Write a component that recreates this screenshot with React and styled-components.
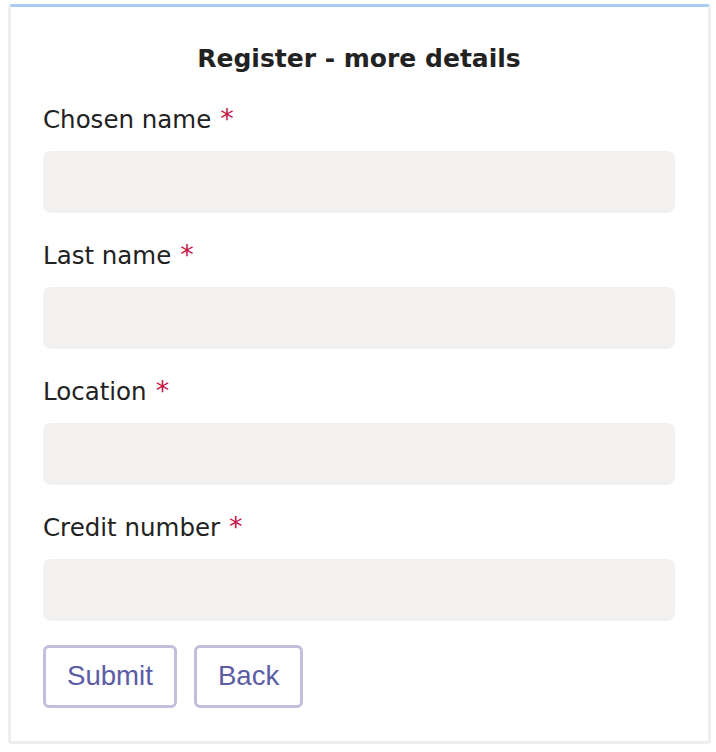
import React from "react";
import styled, { createGlobalStyle } from "styled-components";

const GlobalStyle = createGlobalStyle`
  html, body {
    margin: 0;
    padding: 0;
    background: #ffffff;
  }
  body {
    padding: 4px 5px 0 8px;
  }
`;

const Card = styled.form`
  box-sizing: border-box;
  width: 703px;
  height: 740px;
  border: 3px solid #efeeed;
  border-top: 3px solid #a9cdf0;
  border-radius: 4px;
  background: #fff;
  padding: 36px 33px 0 32px;
  display: flex;
  flex-direction: column;
  font-family: "DejaVu Sans", Verdana, sans-serif;
`;

const Title = styled.h2`
  margin: 0;
  text-align: center;
  font-size: 25px;
  font-weight: bold;
  color: #222;
  line-height: 32px;
`;

const Field = styled.div`
  display: flex;
  flex-direction: column;
  margin-top: ${(p) => (p.first ? "30px" : "28.5px")};
`;

const Label = styled.label`
  font-size: 24.5px;
  color: #222;
  line-height: 30px;
  margin-bottom: 15.5px;
`;

const Required = styled.span`
  color: #c6164a;
  margin-left: 9px;
  font-size: 27px;
  line-height: 20px;
`;

const Input = styled.input`
  box-sizing: border-box;
  width: 100%;
  height: 62px;
  border: none;
  border-radius: 8px;
  background: #f2f1f0;
  outline: none;
  padding: 0 14px;
  font-size: 20px;
`;

const Actions = styled.div`
  display: flex;
  gap: 17px;
  margin-top: 24px;
`;

const Button = styled.button`
  box-sizing: border-box;
  height: 63px;
  padding: 0 21px;
  border: 3px solid #c0c0dc;
  border-radius: 6px;
  background: #fff;
  color: #5c5ca6;
  font-family: "Liberation Sans", Arial, sans-serif;
  font-size: 27.6px;
  cursor: pointer;
`;

const fields = ["Chosen name", "Last name", "Location", "Credit number"];

const App = () => {
  return (
    <>
      <GlobalStyle />
      <Card onSubmit={(e) => e.preventDefault()}>
        <Title>Register - more details</Title>
        {fields.map((name, i) => (
          <Field key={name} first={i === 0}>
            <Label>
              {name}
              <Required>*</Required>
            </Label>
            <Input type="text" />
          </Field>
        ))}
        <Actions>
          <Button type="submit">Submit</Button>
          <Button type="button">Back</Button>
        </Actions>
      </Card>
    </>
  );
};

export default App;
